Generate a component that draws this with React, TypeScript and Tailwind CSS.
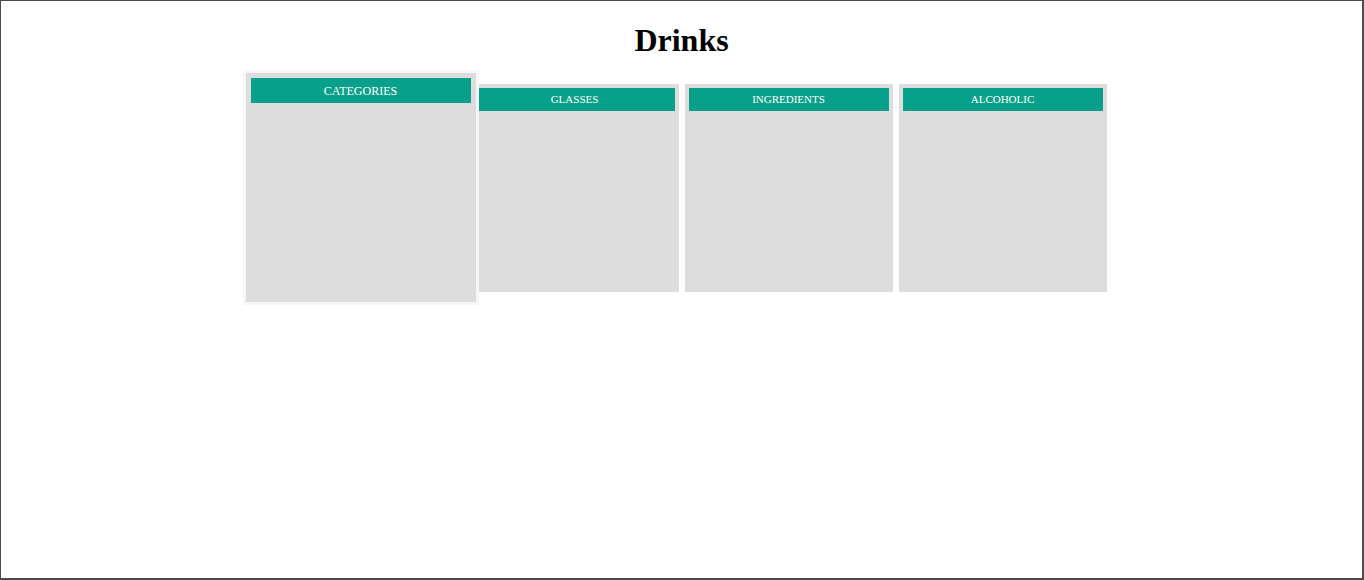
import React from "react";

const cards = ["CATEGORIES", "GLASSES", "INGREDIENTS", "ALCOHOLIC"];

export default function App() {
  return (
    <div
      className="h-[580px] w-full border-t border-l border-r-2 border-b-2 border-[#4b4b4b] bg-white"
      style={{ fontFamily: '"Liberation Serif", "Times New Roman", serif' }}
    >
      <h1 className="mt-[21px] text-center text-[32px] font-bold leading-[37px] text-black">
        Drinks
      </h1>
      <div className="mt-[25px] flex items-start justify-center gap-[6px]">
        {cards.map((c, i) =>
          i === 0 ? (
            <div
              key={c}
              className="relative z-10 -m-[11px] h-[229px] w-[230px] bg-[#dddddd] p-[5px] outline-[3px] outline-solid outline-[#f7f7f7]"
            >
              <div className="flex h-[25px] items-center justify-center bg-[#07a08a] text-[12px] text-white">
                {c}
              </div>
            </div>
          ) : (
            <div key={c} className="h-[208px] w-[208px] bg-[#dddddd] p-[4px]">
              <div className="flex h-[23px] items-center justify-center bg-[#07a08a] text-[11px] text-white">
                {c}
              </div>
            </div>
          )
        )}
      </div>
    </div>
  );
}
